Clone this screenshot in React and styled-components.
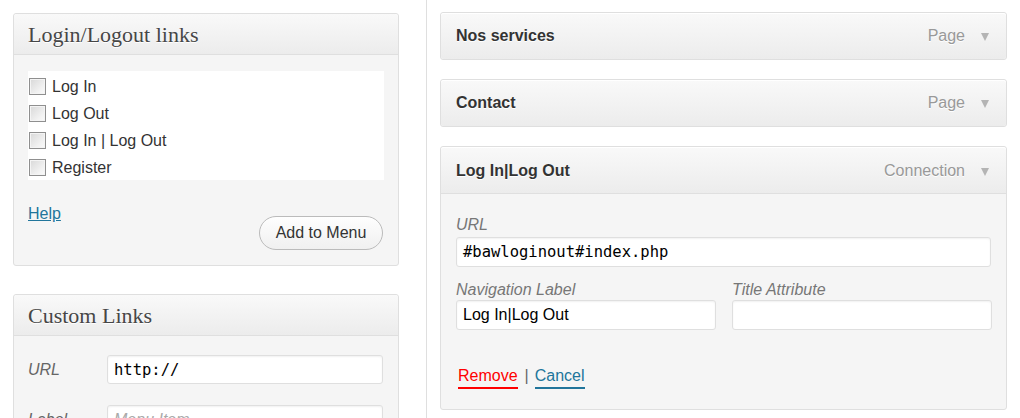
import React from "react";
import styled, { createGlobalStyle } from "styled-components";

const Global = createGlobalStyle`
  html, body { margin: 0; padding: 0; background: #fff; }
  body { font-family: "Liberation Sans", Arial, sans-serif; color: #333; }
  * { box-sizing: border-box; }
`;

const Page = styled.div`
  display: flex;
  align-items: stretch;
  height: 418px;
  overflow: hidden;
  padding-left: 13px;
`;

const LeftCol = styled.div`
  width: 386px;
  flex: none;
  padding-top: 13px;
  display: flex;
  flex-direction: column;
  gap: 28px;
`;

const RightCol = styled.div`
  width: 581px;
  flex: none;
  margin-left: 27px;
  border-left: 1px solid #dfdfdf;
  padding: 12px 0 0 13px;
  display: flex;
  flex-direction: column;
  gap: 19px;
`;

const Postbox = styled.div`
  border: 1px solid #dfdfdf;
  border-radius: 3px;
  background: #f5f5f5;
  box-shadow: inset 0 1px 0 #fff;
  flex: none;
`;

const PostboxHeader = styled.h3`
  margin: 0;
  height: 41px;
  display: flex;
  align-items: center;
  padding: 2px 14px 0;
  font-family: "Liberation Serif", "Times New Roman", serif;
  font-weight: normal;
  font-size: 22px;
  color: #464646;
  background: linear-gradient(#f9f9f9, #ececec);
  border-bottom: 1px solid #dfdfdf;
  border-radius: 3px 3px 0 0;
  text-shadow: 0 1px 0 #fff;
`;

const PostboxBody = styled.div`
  padding: ${(p) => p.$pad || "16px 14px 15px 14px"};
`;

const Checklist = styled.ul`
  list-style: none;
  margin: 0;
  height: 109px;
  padding: 2px 0 0 1px;
  background: #fff;
  overflow: hidden;
`;

const CheckItem = styled.li`
  height: 27px;
  display: flex;
  align-items: center;
  font-size: 16px;
  color: #333;
`;

const Checkbox = styled.span`
  width: 17px;
  height: 17px;
  border: 1px solid #8f8f8f;
  background: linear-gradient(135deg, #d8d8d8 0%, #f2f2f2 70%, #fafafa 100%);
  box-shadow: inset 0 0 0 1px #f4f4f4;
  margin-right: 6px;
  flex: none;
`;

const ActionsRow = styled.div`
  display: flex;
  justify-content: space-between;
  align-items: flex-start;
  margin-top: 25px;
`;

const HelpLink = styled.a`
  font-size: 16px;
  line-height: 18px;
  color: #21759b;
  text-decoration: underline;
  cursor: pointer;
`;

const PillButton = styled.button`
  margin-top: 11px;
  margin-right: 1px;
  width: 124px;
  height: 34px;
  border: 1px solid #bbb;
  border-radius: 17px;
  background: linear-gradient(#fefefe, #f0f0f0);
  font-family: "Liberation Sans", Arial, sans-serif;
  font-size: 16px;
  color: #333;
  padding: 0;
  cursor: pointer;
`;

const FieldRow = styled.div`
  display: flex;
  align-items: center;
  margin-top: ${(p) => p.$mt || 0}px;
`;

const InlineLabel = styled.label`
  width: 79px;
  flex: none;
  font-size: 16px;
  font-style: italic;
  color: #666;
`;

const TextInput = styled.div`
  height: ${(p) => p.$h || 30}px;
  width: ${(p) => (p.$w ? `${p.$w}px` : "100%")};
  border: 1px solid #dfdfdf;
  border-radius: 3px;
  background: #fff;
  box-shadow: inset 0 1px 2px rgba(0, 0, 0, 0.06);
  display: flex;
  align-items: center;
  padding-left: 6px;
  font-size: 16px;
  color: ${(p) => (p.$placeholder ? "#aaa" : "#000")};
  font-style: ${(p) => (p.$placeholder ? "italic" : "normal")};
  font-family: ${(p) =>
    p.$mono ? '"DejaVu Sans Mono", "Liberation Mono", monospace' : '"Liberation Sans", Arial, sans-serif'};
  ${(p) => (p.$mono ? "font-size: 15.5px;" : "")}
`;

const MenuItem = styled.div`
  width: 567px;
  border: 1px solid #dfdfdf;
  border-radius: 3px;
  background: #f5f5f5;
  flex: none;
`;

const ItemBar = styled.div`
  height: ${(p) => (p.$open ? 47 : 46)}px;
  display: flex;
  align-items: center;
  padding: ${(p) => (p.$open ? "1px" : "0")} 16px 0 15px;
  background: linear-gradient(#f9f9f9, #ececec);
  border-bottom: ${(p) => (p.$open ? "1px solid #dfdfdf" : "none")};
  border-radius: ${(p) => (p.$open ? "3px 3px 0 0" : "3px")};
  box-shadow: inset 0 1px 0 #fff;
`;

const ItemTitle = styled.span`
  flex: 1;
  font-weight: bold;
  font-size: 16px;
  color: #333;
  text-shadow: 0 1px 0 #fff;
`;

const ItemType = styled.span`
  font-size: 16px;
  color: #999;
  text-shadow: 0 1px 0 #fff;
`;

const Arrow = styled.span`
  margin-left: 16px;
  margin-right: 1px;
  width: 0;
  height: 0;
  border-left: 4.5px solid transparent;
  border-right: 4.5px solid transparent;
  border-top: 8px solid #b4b4b4;
  margin-top: 2px;
`;

const ItemSettings = styled.div`
  padding: 21px 15px 20px 15px;
`;

const StackLabel = styled.div`
  font-size: 16px;
  line-height: 20px;
  font-style: italic;
  color: #777;
  margin-bottom: ${(p) => p.$mb || 0}px;
`;

const TwoCols = styled.div`
  display: grid;
  grid-template-columns: 260px 260px;
  column-gap: 16px;
  margin-top: 13px;
`;

const ItemActions = styled.div`
  margin-top: 36px;
  display: flex;
  align-items: flex-start;
  font-size: 16px;
  line-height: 20px;
  color: #666;
  padding-left: 2px;
`;

const ActionLink = styled.a`
  color: ${(p) => p.$color};
  text-decoration: none;
  border-bottom: 2px solid ${(p) => p.$color};
  padding-bottom: 1px;
  cursor: pointer;
`;

const Sep = styled.span`
  margin: 0 6px 0 7px;
`;

const items = ["Log In", "Log Out", "Log In | Log Out", "Register"];

export default function App() {
  return (
    <>
      <Global />
      <Page>
        <LeftCol>
          <Postbox>
            <PostboxHeader>Login/Logout links</PostboxHeader>
            <PostboxBody>
              <Checklist>
                {items.map((t) => (
                  <CheckItem key={t}>
                    <Checkbox />
                    {t}
                  </CheckItem>
                ))}
              </Checklist>
              <ActionsRow>
                <HelpLink>Help</HelpLink>
                <PillButton>Add to Menu</PillButton>
              </ActionsRow>
            </PostboxBody>
          </Postbox>
          <Postbox>
            <PostboxHeader>Custom Links</PostboxHeader>
            <PostboxBody $pad="19px 15px 16px 14px">
              <FieldRow>
                <InlineLabel>URL</InlineLabel>
                <TextInput $w={276} $h={29} $mono>http://</TextInput>
              </FieldRow>
              <FieldRow $mt={21}>
                <InlineLabel>Label</InlineLabel>
                <TextInput $w={276} $h={29} $placeholder>Menu Item</TextInput>
              </FieldRow>
            </PostboxBody>
          </Postbox>
        </LeftCol>
        <RightCol>
          <MenuItem>
            <ItemBar>
              <ItemTitle>Nos services</ItemTitle>
              <ItemType>Page</ItemType>
              <Arrow />
            </ItemBar>
          </MenuItem>
          <MenuItem>
            <ItemBar>
              <ItemTitle>Contact</ItemTitle>
              <ItemType>Page</ItemType>
              <Arrow />
            </ItemBar>
          </MenuItem>
          <MenuItem>
            <ItemBar $open>
              <ItemTitle>Log In|Log Out</ItemTitle>
              <ItemType>Connection</ItemType>
              <Arrow />
            </ItemBar>
            <ItemSettings>
              <StackLabel $mb={2}>URL</StackLabel>
              <TextInput $mono>#bawloginout#index.php</TextInput>
              <TwoCols>
                <div>
                  <StackLabel>Navigation Label</StackLabel>
                  <TextInput>Log In|Log Out</TextInput>
                </div>
                <div>
                  <StackLabel>Title Attribute</StackLabel>
                  <TextInput />
                </div>
              </TwoCols>
              <ItemActions>
                <ActionLink $color="#f00">Remove</ActionLink>
                <Sep>|</Sep>
                <ActionLink $color="#21759b">Cancel</ActionLink>
              </ItemActions>
            </ItemSettings>
          </MenuItem>
        </RightCol>
      </Page>
    </>
  );
}
